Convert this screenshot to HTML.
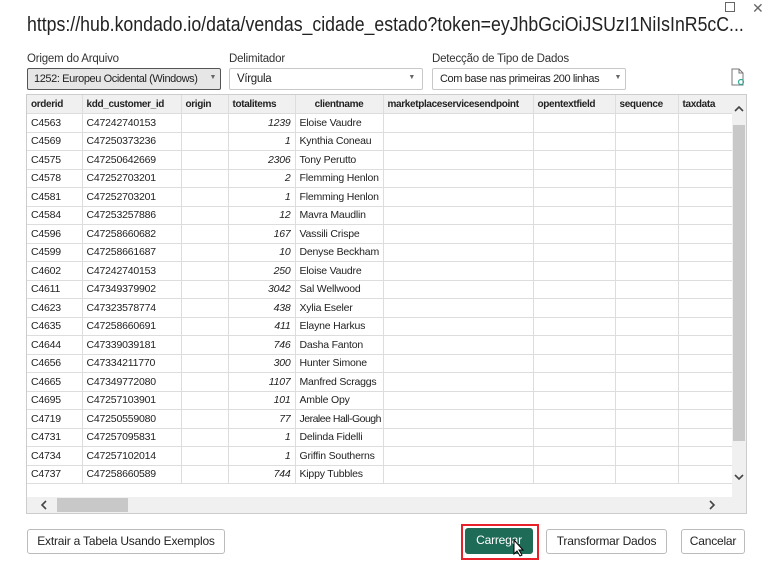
<!DOCTYPE html>
<html><head><meta charset="utf-8"><style>
*{box-sizing:border-box;margin:0;padding:0}
body{width:768px;height:569px;background:#fff;position:relative;overflow:hidden;font-family:"Liberation Sans",sans-serif;color:#222;white-space:nowrap}
.a{position:absolute}
.lbl{font-size:11.5px;color:#333;letter-spacing:-0.2px}
.dd{position:absolute;top:68px;height:22px;border:1px solid #c8c8c8;border-radius:2px;font-size:11.5px;padding:4px 7px;background:#fff;letter-spacing:-0.3px;overflow:hidden}
.dd .c{position:absolute;right:7px;top:5px;font-size:7px;color:#666}
table{border-collapse:collapse;font-size:10.5px;table-layout:fixed;letter-spacing:-0.2px}
td,th{height:18.5px;border-right:1px solid #ddd;border-bottom:1px solid #ddd;padding:0 4px;white-space:nowrap;overflow:hidden;text-align:left}
th{background:#f0f0f0;font-weight:bold;font-size:10px;letter-spacing:-0.35px}
td.n{text-align:right;font-style:italic}
.btn{position:absolute;top:529px;height:25px;border:1px solid #bbb;border-radius:3px;font-size:12px;text-align:center;line-height:23px;background:#fff;color:#222;letter-spacing:-0.2px}
</style></head><body>
<div class="a" style="left:752px;top:0;font-size:14px;color:#666">✕</div>
<div class="a" style="left:725px;top:2px;width:10px;height:10px;border:1px solid #666"></div>
<div class="a" style="left:27px;top:14px;font-size:20px;color:#222;transform:scaleX(0.885);transform-origin:left">https://hub.kondado.io/data/vendas_cidade_estado?token=eyJhbGciOiJSUzI1NiIsInR5cC...</div>
<div class="a lbl" style="left:27px;top:53px">Origem do Arquivo</div>
<div class="a lbl" style="left:229px;top:53px">Delimitador</div>
<div class="a lbl" style="left:432px;top:53px">Detecção de Tipo de Dados</div>
<div class="dd" style="left:27px;width:194px;background:#e6e6e6;border-color:#555;font-size:11px;letter-spacing:-0.4px;padding-left:6px">1252: Europeu Ocidental (Windows)<span class="c" style="right:4px">▼</span></div>
<div class="dd" style="left:229px;width:194px">Vírgula<span class="c">▼</span></div>
<div class="dd" style="left:432px;width:194px;font-size:11px;letter-spacing:-0.4px">Com base nas primeiras 200 linhas<span class="c" style="right:4px">▼</span></div>
<svg class="a" style="left:731px;top:68px" width="14" height="18" viewBox="0 0 14 18"><path d="M1 1h7l4 4v12H1z M8 1v4h4" fill="none" stroke="#777"/><circle cx="10" cy="14" r="2.5" fill="none" stroke="#3a9" stroke-width="1.2"/></svg>
<div class="a" style="left:26px;top:94px;width:721px;height:420px;border:1px solid #ccc;overflow:hidden">
<table style="width:705px">
<colgroup><col style="width:55px"><col style="width:99px"><col style="width:47px"><col style="width:67px"><col style="width:88px"><col style="width:150px"><col style="width:82px"><col style="width:63px"><col style="width:54px"></colgroup>
<tr><th>orderid</th><th>kdd_customer_id</th><th>origin</th><th>totalitems</th><th style="text-align:center">clientname</th><th>marketplaceservicesendpoint</th><th>opentextfield</th><th>sequence</th><th>taxdata</th></tr>
<tr><td>C4563</td><td>C47242740153</td><td></td><td class="n">1239</td><td>Eloise Vaudre</td><td></td><td></td><td></td><td></td></tr>
<tr><td>C4569</td><td>C47250373236</td><td></td><td class="n">1</td><td>Kynthia Coneau</td><td></td><td></td><td></td><td></td></tr>
<tr><td>C4575</td><td>C47250642669</td><td></td><td class="n">2306</td><td>Tony Perutto</td><td></td><td></td><td></td><td></td></tr>
<tr><td>C4578</td><td>C47252703201</td><td></td><td class="n">2</td><td>Flemming Henlon</td><td></td><td></td><td></td><td></td></tr>
<tr><td>C4581</td><td>C47252703201</td><td></td><td class="n">1</td><td>Flemming Henlon</td><td></td><td></td><td></td><td></td></tr>
<tr><td>C4584</td><td>C47253257886</td><td></td><td class="n">12</td><td>Mavra Maudlin</td><td></td><td></td><td></td><td></td></tr>
<tr><td>C4596</td><td>C47258660682</td><td></td><td class="n">167</td><td>Vassili Crispe</td><td></td><td></td><td></td><td></td></tr>
<tr><td>C4599</td><td>C47258661687</td><td></td><td class="n">10</td><td>Denyse Beckham</td><td></td><td></td><td></td><td></td></tr>
<tr><td>C4602</td><td>C47242740153</td><td></td><td class="n">250</td><td>Eloise Vaudre</td><td></td><td></td><td></td><td></td></tr>
<tr><td>C4611</td><td>C47349379902</td><td></td><td class="n">3042</td><td>Sal Wellwood</td><td></td><td></td><td></td><td></td></tr>
<tr><td>C4623</td><td>C47323578774</td><td></td><td class="n">438</td><td>Xylia Eseler</td><td></td><td></td><td></td><td></td></tr>
<tr><td>C4635</td><td>C47258660691</td><td></td><td class="n">411</td><td>Elayne Harkus</td><td></td><td></td><td></td><td></td></tr>
<tr><td>C4644</td><td>C47339039181</td><td></td><td class="n">746</td><td>Dasha Fanton</td><td></td><td></td><td></td><td></td></tr>
<tr><td>C4656</td><td>C47334211770</td><td></td><td class="n">300</td><td>Hunter Simone</td><td></td><td></td><td></td><td></td></tr>
<tr><td>C4665</td><td>C47349772080</td><td></td><td class="n">1107</td><td>Manfred Scraggs</td><td></td><td></td><td></td><td></td></tr>
<tr><td>C4695</td><td>C47257103901</td><td></td><td class="n">101</td><td>Amble Opy</td><td></td><td></td><td></td><td></td></tr>
<tr><td>C4719</td><td>C47250559080</td><td></td><td class="n">77</td><td style="letter-spacing:-0.5px">Jeralee Hall-Gough</td><td></td><td></td><td></td><td></td></tr>
<tr><td>C4731</td><td>C47257095831</td><td></td><td class="n">1</td><td>Delinda Fidelli</td><td></td><td></td><td></td><td></td></tr>
<tr><td>C4734</td><td>C47257102014</td><td></td><td class="n">1</td><td>Griffin Southerns</td><td></td><td></td><td></td><td></td></tr>
<tr><td>C4737</td><td>C47258660589</td><td></td><td class="n">744</td><td>Kippy Tubbles</td><td></td><td></td><td></td><td></td></tr>
</table>
<div class="a" style="left:705px;top:0;width:14px;height:418px;background:#f0f0f0"></div>
<div class="a" style="left:706px;top:30px;width:12px;height:316px;background:#c8c8c8"></div>
<svg class="a" style="left:707px;top:10px" width="10" height="8"><path d="M1 6l4-4 4 4" fill="none" stroke="#444" stroke-width="1.6"/></svg>
<svg class="a" style="left:707px;top:378px" width="10" height="8"><path d="M1 2l4 4 4-4" fill="none" stroke="#444" stroke-width="1.6"/></svg>
<div class="a" style="left:0;top:402px;width:705px;height:16px;background:#f0f0f0"></div>
<div class="a" style="left:30px;top:403px;width:71px;height:14px;background:#c8c8c8"></div>
<svg class="a" style="left:13px;top:405px" width="8" height="10"><path d="M6 1L2 5l4 4" fill="none" stroke="#444" stroke-width="1.6"/></svg>
<svg class="a" style="left:681px;top:405px" width="8" height="10"><path d="M2 1l4 4-4 4" fill="none" stroke="#444" stroke-width="1.6"/></svg>
</div>
<div class="btn" style="left:27px;width:198px">Extrair a Tabela Usando Exemplos</div>
<div class="a" style="left:461px;top:524px;width:78px;height:36px;border:2px solid #e8202a"></div>
<div class="btn" style="left:465px;width:68px;background:#1e6b57;border-color:#1e6b57;color:#fff;top:528px;height:26px">Carregar</div>
<svg class="a" style="left:513px;top:539px" width="12" height="18" viewBox="0 0 12 18"><path d="M1 1v14l3-3 3 5 2-1-3-5h4z" fill="#fff" stroke="#000"/></svg>
<div class="btn" style="left:546px;width:121px">Transformar Dados</div>
<div class="btn" style="left:681px;width:64px">Cancelar</div>
</body></html>
